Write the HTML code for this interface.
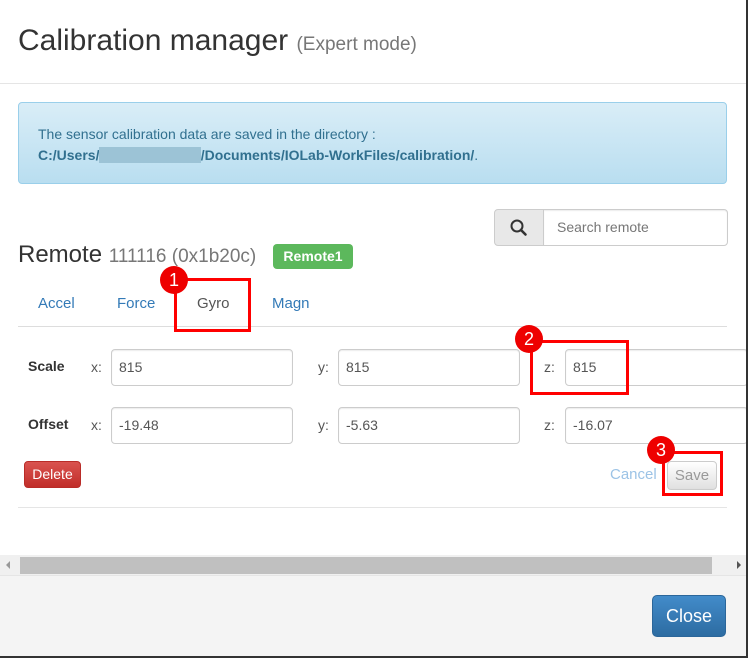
<!DOCTYPE html>
<html><head><style>
*{box-sizing:border-box;margin:0;padding:0}
body{width:748px;height:658px;overflow:hidden;background:#fff;font-family:"Liberation Sans",sans-serif;position:relative;color:#333}
.a{position:absolute}
.inp{position:absolute;height:37px;border:1px solid #ccc;border-radius:4px;background:#fff;font-size:14px;color:#555;padding:9px 7px;box-shadow:inset 0 1px 1px rgba(0,0,0,.075)}
.lbl{position:absolute;font-size:14px;color:#555}
.red{position:absolute;border:3px solid #f00}
.num{position:absolute;width:28px;height:28px;border-radius:50%;background:#e00;color:#fff;font-size:18px;text-align:center;line-height:28px}
.tab{position:absolute;top:295px;font-size:15px;color:#337ab7}
</style></head><body>
<div class="a" style="left:18px;top:24px;font-size:30px;color:#333">Calibration manager <span style="font-size:19px;color:#777">(Expert mode)</span></div>
<div class="a" style="left:0;top:83px;width:746px;height:1px;background:#e5e5e5"></div>
<div class="a" style="left:18px;top:102px;width:709px;height:82px;border:1px solid #9acfea;border-radius:4px;background:linear-gradient(#d9edf7,#b9def0);color:#31708f;font-size:14px;padding:21px 19px;line-height:21px">The sensor calibration data are saved in the directory :<br><b>C:/Users/<span style="background:#9cc3d6;color:transparent">xxxxxxxxxxxxx</span>/Documents/IOLab-WorkFiles/calibration/</b>.</div>
<div class="a" style="left:494px;top:209px;width:50px;height:37px;border:1px solid #ccc;border-radius:4px 0 0 4px;background:#e8e8e8"></div>
<svg class="a" style="left:509px;top:218px" width="20" height="20" viewBox="0 0 20 20"><circle cx="8" cy="8" r="5.5" fill="none" stroke="#333" stroke-width="2"/><line x1="12" y1="12" x2="16.5" y2="16.5" stroke="#333" stroke-width="2.6" stroke-linecap="round"/></svg>
<div class="inp" style="left:543px;top:209px;width:185px;border-radius:0 4px 4px 0;color:#777;padding-left:13px">Search remote</div>
<div class="a" style="left:18px;top:241px;font-size:24px;color:#333">Remote <span style="font-size:19px;color:#777">111116 (0x1b20c)</span></div>
<div class="a" style="left:273px;top:244px;width:80px;height:25px;background:#5cb85c;border-radius:4px;color:#fff;font-weight:bold;font-size:14px;text-align:center;line-height:25px">Remote1</div>
<div class="tab" style="left:38px">Accel</div>
<div class="tab" style="left:117px">Force</div>
<div class="tab" style="left:197px;color:#555">Gyro</div>
<div class="tab" style="left:272px">Magn</div>
<div class="a" style="left:18px;top:326px;width:709px;height:1px;background:#ddd"></div>
<div class="lbl" style="left:28px;top:358px;font-weight:bold;color:#333">Scale</div>
<div class="lbl" style="left:28px;top:416px;font-weight:bold;color:#333">Offset</div>
<div class="lbl" style="left:91px;top:359px">x:</div><div class="lbl" style="left:318px;top:359px">y:</div><div class="lbl" style="left:544px;top:359px">z:</div>
<div class="lbl" style="left:91px;top:417px">x:</div><div class="lbl" style="left:318px;top:417px">y:</div><div class="lbl" style="left:544px;top:417px">z:</div>
<div class="inp" style="left:111px;top:349px;width:182px">815</div>
<div class="inp" style="left:338px;top:349px;width:182px">815</div>
<div class="inp" style="left:565px;top:349px;width:183px">815</div>
<div class="inp" style="left:111px;top:407px;width:182px">-19.48</div>
<div class="inp" style="left:338px;top:407px;width:182px">-5.63</div>
<div class="inp" style="left:565px;top:407px;width:183px">-16.07</div>
<div class="a" style="left:24px;top:461px;width:57px;height:27px;border-radius:4px;background:linear-gradient(#d9534f,#c12e2a);border:1px solid #b92c28;color:#fff;font-size:14px;text-align:center;line-height:25px">Delete</div>
<div class="a" style="left:610px;top:466px;font-size:15px;color:#9cc3e6">Cancel</div>
<div class="a" style="left:667px;top:461px;width:50px;height:29px;border-radius:4px;background:linear-gradient(#fff,#e0e0e0);border:1px solid #ccc;color:#999;font-size:15px;text-align:center;line-height:27px">Save</div>
<div class="a" style="left:18px;top:507px;width:709px;height:1px;background:#e5e5e5"></div>
<div class="a" style="left:0;top:555px;width:746px;height:20px;background:#f0f0f0"></div>
<div class="a" style="left:20px;top:557px;width:692px;height:17px;background:#c0c0c0"></div>
<div class="a" style="left:6px;top:561px;width:0;height:0;border:4px solid transparent;border-right:4px solid #999;border-left:0"></div>
<div class="a" style="left:737px;top:561px;width:0;height:0;border:4px solid transparent;border-left:4px solid #555;border-right:0"></div>
<div class="a" style="left:0;top:575px;width:746px;height:81px;background:#f4f4f4;border-top:1px solid #e5e5e5"></div>
<div class="a" style="left:652px;top:595px;width:74px;height:42px;border-radius:5px;background:linear-gradient(#428bca,#2d6ca2);border:1px solid #2b669a;color:#fff;font-size:18px;text-align:center;line-height:40px">Close</div>
<div class="a" style="left:746px;top:0;width:2px;height:658px;background:#333"></div>
<div class="a" style="left:0;top:656px;width:748px;height:2px;background:#333"></div>
<div class="red" style="left:174px;top:278px;width:77px;height:54px"></div>
<div class="red" style="left:530px;top:340px;width:99px;height:55px"></div>
<div class="red" style="left:662px;top:451px;width:61px;height:45px"></div>
<div class="num" style="left:160px;top:266px">1</div>
<div class="num" style="left:515px;top:325px">2</div>
<div class="num" style="left:647px;top:436px">3</div>
</body></html>
